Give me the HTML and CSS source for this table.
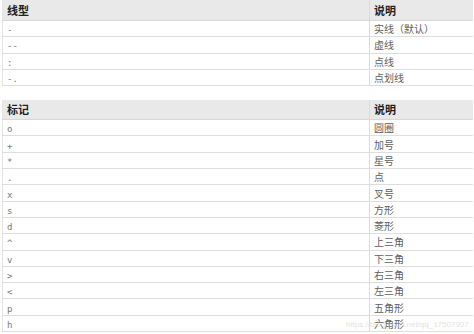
FILE: index.html
```html
<!DOCTYPE html>
<html lang="zh">
<head>
<meta charset="utf-8">
<link rel="stylesheet" href="styles.css">
</head>
<body>
<div class="page">
  <table class="tbl t1">
    <thead><tr><th class="c1">线型</th><th class="c2">说明</th></tr></thead>
    <tbody>
      <tr><td class="code"><span>-</span></td><td>实线（默认）</td></tr>
      <tr><td class="code"><span>--</span></td><td>虚线</td></tr>
      <tr><td class="code"><span>:</span></td><td>点线</td></tr>
      <tr><td class="code"><span>-.</span></td><td>点划线</td></tr>
    </tbody>
  </table>
  <table class="tbl t2">
    <thead><tr><th class="c1">标记</th><th class="c2">说明</th></tr></thead>
    <tbody>
      <tr><td class="code"><span>o</span></td><td>圆圈</td></tr>
      <tr><td class="code"><span>+</span></td><td>加号</td></tr>
      <tr><td class="code"><span>*</span></td><td>星号</td></tr>
      <tr><td class="code"><span>.</span></td><td>点</td></tr>
      <tr><td class="code"><span>x</span></td><td>叉号</td></tr>
      <tr><td class="code"><span>s</span></td><td>方形</td></tr>
      <tr><td class="code"><span>d</span></td><td>菱形</td></tr>
      <tr><td class="code"><span>^</span></td><td>上三角</td></tr>
      <tr><td class="code"><span>v</span></td><td>下三角</td></tr>
      <tr><td class="code"><span>&gt;</span></td><td>右三角</td></tr>
      <tr><td class="code"><span>&lt;</span></td><td>左三角</td></tr>
      <tr><td class="code"><span>p</span></td><td>五角形</td></tr>
      <tr><td class="code"><span>h</span></td><td>六角形</td></tr>
    </tbody>
  </table>
  <div class="watermark">https://blog.csdn.net/qq_17507907</div>
</div>
</body>
</html>
```
FILE: styles.css
```css
html, body { margin: 0; padding: 0; background: #fff; }
.page {
  position: relative;
  padding: 0 1px 0 2px;
  font-family: "Noto Sans CJK SC", "Liberation Sans", sans-serif;
}
.tbl {
  width: 471px;
  border-collapse: collapse;
  table-layout: fixed;
  border-left: 1px solid #e4e4e4;
}
.t1 { margin-bottom: 14px; }
.tbl th {
  background: #e9e9e9;
  color: #222;
  font-size: 11px;
  font-weight: bold;
  text-align: left;
  padding: 0 4px;
  height: 20px;
  line-height: 20px;
  border-bottom: 1px solid #d8d8d8;
}
.t2 th { height: 19px; line-height: 19px; }
.tbl th.c1 { width: 358px; }
.tbl th.c2 { border-left: 1px solid #dcdcdc; }
.tbl td {
  height: 15.3px;
  padding: 0 4px;
  font-size: 10px;
  line-height: 15px;
  color: #5e5e5e;
  border-bottom: 1px solid #dedede;
  white-space: nowrap;
  overflow: hidden;
}
.tbl td + td { border-left: 1px solid #dcdcdc; }
.tbl td.code {
  font-family: "DejaVu Sans Mono", "Liberation Mono", monospace;
  font-size: 9px;
  color: #777;
}
.tbl td.code span {
  line-height: 1;
  vertical-align: -2px;
}
.watermark {
  position: absolute;
  left: 346px;
  top: 320px;
  font-family: "Liberation Sans", sans-serif;
  font-size: 8px;
  color: rgba(205, 205, 205, 0.6);
  pointer-events: none;
}
```
